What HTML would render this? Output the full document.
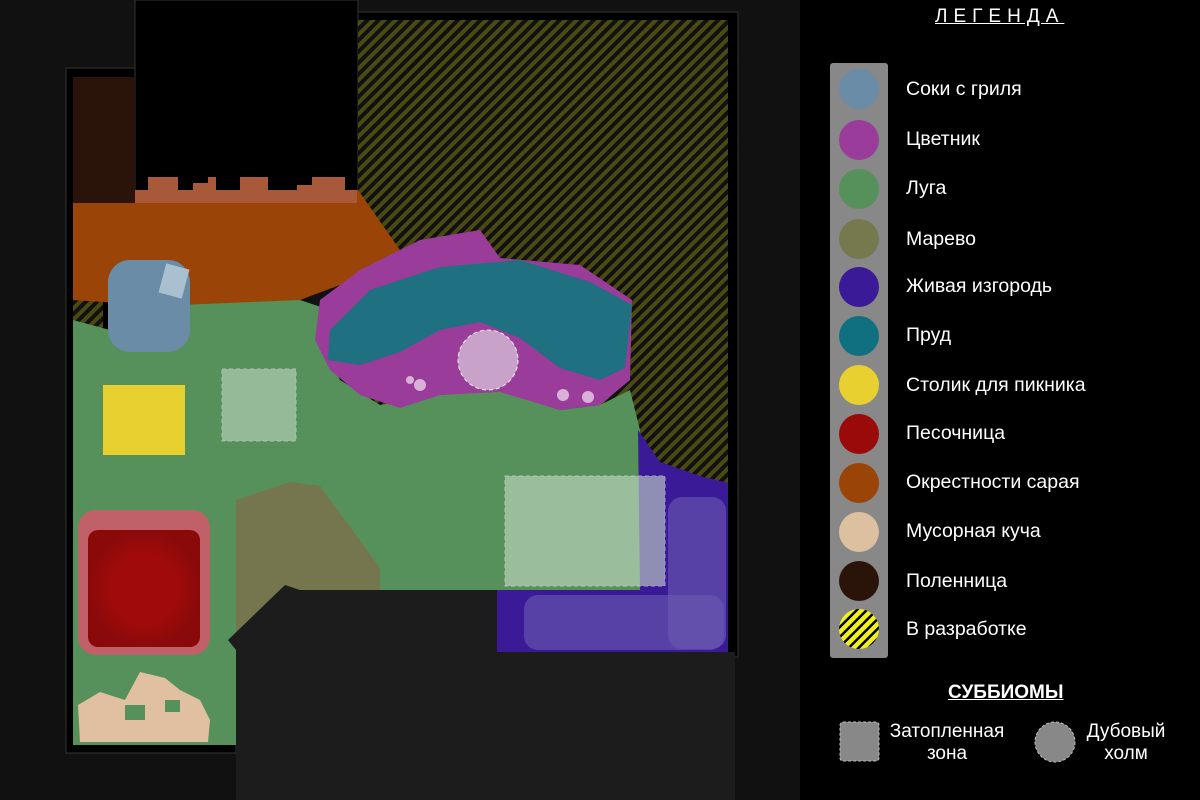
<!DOCTYPE html>
<html><head><meta charset="utf-8"><style>
body{margin:0;width:1200px;height:800px;overflow:hidden;background:#000;font-family:"Liberation Sans",sans-serif}
.lg{position:absolute;color:#fff;font-size:19.5px;left:906px}
</style></head><body>
<svg width="1200" height="800" style="position:absolute;left:0;top:0">
<defs>
<pattern id="h" width="8" height="8" patternUnits="userSpaceOnUse" patternTransform="rotate(45)">
<rect width="8" height="8" fill="#4a4a12"/><rect width="4" height="8" fill="#111"/></pattern>
<pattern id="hy" width="7" height="7" patternUnits="userSpaceOnUse" patternTransform="rotate(45)">
<rect width="7" height="7" fill="#f0f020"/><rect width="2.5" height="7" fill="#000"/></pattern>
<radialGradient id="sb"><stop offset="0.6" stop-color="#a00a0a"/><stop offset="1" stop-color="#8a0a0a"/></radialGradient>
</defs>
<rect x="0" y="0" width="800" height="800" fill="#111"/>
<rect x="66" y="68" width="170" height="685" fill="#000" stroke="#333"/>
<rect x="135" y="0" width="223" height="200" fill="#000" stroke="#333"/>
<rect x="358" y="12" width="380" height="645" fill="#000" stroke="#333"/>
<rect x="358" y="20" width="370" height="470" fill="url(#h)"/>
<rect x="73" y="77" width="62" height="130" fill="#2a140a"/>
<rect x="73" y="290" width="30" height="40" fill="url(#h)"/>
<!-- barn -->
<path d="M73,203 L135,203 L135,190 L358,190 L400,250 L390,275 L340,285 L300,300 L200,310 L150,305 L73,300 Z" fill="#9a4507"/>
<g fill="#a8593a">
<rect x="135" y="190" width="222" height="13"/>
<rect x="148" y="177" width="30" height="13"/>
<rect x="193" y="183" width="22" height="7"/>
<rect x="208" y="177" width="8" height="13"/>
<rect x="240" y="177" width="28" height="13"/>
<rect x="297" y="185" width="15" height="5"/>
<rect x="312" y="177" width="33" height="13"/>
</g>
<!-- meadow -->
<path d="M73,320 L110,330 L180,305 L300,300 L330,310 L320,345 L340,380 L380,405 L440,395 L500,390 L560,410 L600,405 L630,390 L640,430 L640,590 L497,590 L236,590 L236,745 L73,745 Z" fill="#56915c"/>
<!-- haze -->
<path d="M236,500 L290,482 L320,486 L380,568 L380,590 L300,590 L236,640 Z" fill="#76764e"/>
<!-- flower -->
<path d="M320,300 L360,270 L420,240 L480,230 L500,258 L580,265 L632,300 L630,380 L600,405 L560,410 L500,392 L440,395 L400,408 L360,395 L330,370 L315,340 Z" fill="#9a3c9a"/>
<path d="M330,330 L370,290 L440,267 L520,260 L590,282 L632,305 L625,368 L600,380 L560,368 L520,338 L480,322 L440,330 L400,352 L360,365 L328,360 Z" fill="#1f7080"/>
<circle cx="488" cy="360" r="30" fill="#c9a2c9" stroke="#eee" stroke-dasharray="4 3"/>
<g fill="#d8b0d8"><circle cx="420" cy="385" r="6"/><circle cx="563" cy="395" r="6"/><circle cx="588" cy="397" r="6"/><circle cx="410" cy="380" r="4"/></g>
<!-- hedge -->
<path d="M638,430 L660,462 L700,476 L728,483 L728,652 L497,652 L497,590 L640,590 Z" fill="#3a1a96"/>
<rect x="668" y="497" width="58" height="152" rx="14" fill="#6a5ab0" opacity="0.6"/>
<rect x="524" y="595" width="200" height="55" rx="14" fill="#6a5ab0" opacity="0.6"/>
<!-- grill -->
<rect x="108" y="260" width="82" height="92" rx="22" fill="#6a8ca6"/>
<rect x="162" y="266" width="24" height="30" fill="#a8c0d0" transform="rotate(15 174 281)"/>
<!-- flooded -->
<rect x="222" y="369" width="74" height="72" fill="#c8dcc8" opacity="0.55" stroke="#eee" stroke-dasharray="4 3"/>
<rect x="505" y="476" width="160" height="110" fill="#c8dcc8" opacity="0.6" stroke="#eee" stroke-dasharray="4 3"/>
<!-- picnic -->
<rect x="103" y="385" width="82" height="70" fill="#e8d030"/>
<!-- sandbox -->
<rect x="78" y="510" width="132" height="145" rx="18" fill="#c06068"/>
<rect x="88" y="530" width="112" height="117" rx="10" fill="url(#sb)"/>
<!-- trash -->
<g fill="#e0c0a0">
<path d="M78,705 L100,692 L125,700 L140,672 L165,678 L180,690 L200,700 L210,720 L208,742 L80,742 Z"/>
</g>
<rect x="125" y="705" width="20" height="15" fill="#56915c"/>
<rect x="165" y="700" width="15" height="12" fill="#56915c"/>
<!-- building -->
<path d="M228,640 L285,585 L300,590 L497,590 L497,652 L735,652 L735,800 L236,800 L236,650 Z" fill="#1c1c1c"/>
<rect x="800" y="0" width="400" height="800" fill="#000"/>
<rect x="830" y="63" width="58" height="595" rx="3" fill="#888"/>
<g>
<circle cx="859" cy="89" r="20" fill="#6a8ca6"/>
<circle cx="859" cy="140" r="20" fill="#9a3c9a"/>
<circle cx="859" cy="189" r="20" fill="#56915c"/>
<circle cx="859" cy="239" r="20" fill="#76784e"/>
<circle cx="859" cy="287" r="20" fill="#3a1a96"/>
<circle cx="859" cy="336" r="20" fill="#107080"/>
<circle cx="859" cy="385" r="20" fill="#e8d030"/>
<circle cx="859" cy="434" r="20" fill="#9a0a0a"/>
<circle cx="859" cy="483" r="20" fill="#9a4507"/>
<circle cx="859" cy="532" r="20" fill="#ddc0a0"/>
<circle cx="859" cy="581" r="20" fill="#2a140a"/>
<circle cx="859" cy="629" r="20" fill="url(#hy)"/>
</g>
<rect x="840" y="722" width="39" height="39" rx="3" fill="#888" stroke="#bbb" stroke-dasharray="3 2"/>
<circle cx="1055" cy="742" r="20" fill="#888" stroke="#bbb" stroke-dasharray="3 2"/>
</svg>
<div style="position:absolute;left:935px;top:6px;color:#fff;font-size:19px;letter-spacing:6px;text-decoration:underline">ЛЕГЕНДА</div>
<div class="lg" style="top:78px">Соки с гриля</div>
<div class="lg" style="top:128px">Цветник</div>
<div class="lg" style="top:177px">Луга</div>
<div class="lg" style="top:228px">Марево</div>
<div class="lg" style="top:275px">Живая изгородь</div>
<div class="lg" style="top:324px">Пруд</div>
<div class="lg" style="top:374px">Столик для пикника</div>
<div class="lg" style="top:422px">Песочница</div>
<div class="lg" style="top:471px">Окрестности сарая</div>
<div class="lg" style="top:520px">Мусорная куча</div>
<div class="lg" style="top:570px">Поленница</div>
<div class="lg" style="top:618px">В разработке</div>
<div style="position:absolute;left:948px;top:682px;color:#fff;font-size:19px;font-weight:bold;text-decoration:underline">СУББИОМЫ</div>
<div style="position:absolute;left:880px;width:134px;top:721px;color:#fff;font-size:19px;text-align:center;line-height:22px">Затопленная<br>зона</div>
<div style="position:absolute;left:1076px;width:100px;top:721px;color:#fff;font-size:19px;text-align:center;line-height:22px">Дубовый<br>холм</div>
</body></html>
